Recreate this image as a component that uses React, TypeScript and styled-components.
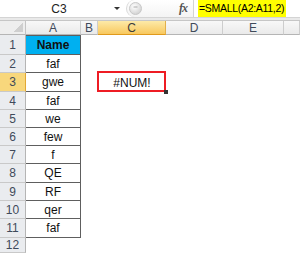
import React from 'react';
import styled, { createGlobalStyle } from 'styled-components';

const GlobalStyle = createGlobalStyle`
  body {
    margin: 0;
    background: #ffffff;
    font-family: "Liberation Sans", Arial, sans-serif;
  }
`;

const Window = styled.div`
  width: 300px;
  height: 253px;
  overflow: hidden;
  display: flex;
  flex-direction: column;
  background: #ffffff;
`;

const FormulaBar = styled.div`
  height: 22px;
  display: flex;
  align-items: stretch;
  background: #ffffff;
  border-bottom: 1px solid #d4d4d4;
  box-sizing: border-box;
`;

const NameBox = styled.div`
  width: 126px;
  display: flex;
  align-items: center;
  font-size: 12px;
  color: #222;
`;

const NameText = styled.span`
  flex: 1;
  text-align: center;
  padding-left: 4px;
`;

const DropArrow = styled.span`
  width: 0;
  height: 0;
  margin-right: 6px;
  border-left: 3px solid transparent;
  border-right: 3px solid transparent;
  border-top: 3px solid #333;
`;

const Tools = styled.div`
  width: 67px;
  display: flex;
  align-items: center;
  justify-content: space-between;
  padding: 0 6px 0 2px;
  box-sizing: border-box;
  border-left: 1px solid #d8d8d8;
  border-radius: 9px 0 0 9px;
  background: linear-gradient(#ffffff, #f4f4f4);
`;

const Fx = styled.span`
  font-family: "Liberation Serif", "Times New Roman", serif;
  font-style: italic;
  font-weight: bold;
  font-size: 12px;
  color: #555;
  letter-spacing: -1px;
`;

const FormulaInput = styled.div`
  flex: 1;
  display: flex;
  align-items: center;
  padding-left: 4px;
  border-left: 1px solid #d4d4d4;
  white-space: nowrap;
`;

const FormulaText = styled.span`
  background: #ffff00;
  font-size: 10.5px;
  letter-spacing: -0.3px;
  line-height: 17px;
  padding: 0 2px 0 1px;
  color: #000;
`;

const Spacer = styled.div`
  height: 3px;
  background: #e9e9e9;
  border-bottom: 1px solid #c6c6c6;
`;

const Sheet = styled.div`
  flex: 1;
  display: grid;
  grid-template-columns: 26px 55px 17px 68px 57px 61px 1fr;
  grid-template-rows: 14px 20px 18px 19px 18px 18px 18px 18px 19px 18px 18px 19px 1fr;
`;

const Corner = styled.div`
  position: relative;
  background: #eeeeee;
  border-right: 1px solid #c4c4c4;
  border-bottom: 1px solid #b5b5b5;

  &::after {
    content: '';
    position: absolute;
    right: 2px;
    bottom: 2px;
    width: 10px;
    height: 9px;
    background: linear-gradient(135deg, transparent 50%, #cfcfcf 50%);
  }
`;

const ColHeader = styled.div<{ $active?: boolean }>`
  display: flex;
  align-items: center;
  justify-content: center;
  font-size: 12px;
  color: ${(p) => (p.$active ? '#3b3b3b' : '#3f4a5a')};
  background: ${(p) =>
    p.$active
      ? 'linear-gradient(#fdeaa8, #f8c85e)'
      : 'linear-gradient(#f8f8f8, #eaeaea)'};
  border-right: 1px solid ${(p) => (p.$active ? '#e2b04a' : '#cdcdcd')};
  border-bottom: 1px solid ${(p) => (p.$active ? '#e09a1c' : '#b5b5b5')};
`;

const RowHeader = styled.div<{ $active?: boolean }>`
  display: flex;
  align-items: center;
  justify-content: center;
  font-size: 12px;
  color: #3f4a5a;
  background: ${(p) => (p.$active ? '#f8d77c' : '#eaecef')};
  border-right: 1px solid ${(p) => (p.$active ? '#e2a834' : '#b5b5b5')};
  border-bottom: 1px solid #c9c9c9;
`;

const DataCell = styled.div<{ $head?: boolean; $first?: boolean }>`
  display: flex;
  align-items: center;
  justify-content: center;
  font-size: 12px;
  font-weight: ${(p) => (p.$head ? 'bold' : 'normal')};
  color: #111;
  background: ${(p) => (p.$head ? '#00b0f0' : '#ffffff')};
  border-right: 1px solid #5e5e5e;
  border-bottom: 1px solid #5e5e5e;
  border-top: ${(p) => (p.$first ? '1px solid #5e5e5e' : 'none')};
  box-sizing: border-box;
`;

const Blank = styled.div`
  background: #ffffff;
`;

const ActiveCell = styled.div`
  position: relative;
  display: flex;
  align-items: center;
  justify-content: center;
  font-size: 12px;
  color: #111;

  &::before {
    content: '';
    position: absolute;
    left: -1px;
    top: -2px;
    right: 0;
    bottom: 0;
    border: 2px solid #ee1c24;
  }

  &::after {
    content: '';
    position: absolute;
    right: -2px;
    bottom: -2px;
    width: 4px;
    height: 4px;
    background: #333;
  }
`;

const columns = ['A', 'B', 'C', 'D', 'E', ''];
const names = ['faf', 'gwe', 'faf', 'we', 'few', 'f', 'QE', 'RF', 'qer', 'faf'];

const Grip = () => (
  <svg width="13" height="13" viewBox="0 0 13 13">
    <defs>
      <radialGradient id="g" cx="40%" cy="35%" r="70%">
        <stop offset="0" stopColor="#ffffff" />
        <stop offset="1" stopColor="#cfcfcf" />
      </radialGradient>
    </defs>
    <circle cx="6.5" cy="6.5" r="6" fill="url(#g)" stroke="#c8c8c8" />
    <line x1="4.5" y1="5" x2="8.5" y2="5" stroke="#a8a8a8" strokeWidth="1" />
  </svg>
);

const App = () => {
  const rows: React.ReactNode[] = [];

  for (let r = 1; r <= 12; r++) {
    rows.push(
      <RowHeader key={`h${r}`} $active={r === 3}>
        {r}
      </RowHeader>
    );
    if (r === 1) {
      rows.push(
        <DataCell key="a1" $head $first>
          Name
        </DataCell>
      );
    } else if (r <= 11) {
      rows.push(<DataCell key={`a${r}`}>{names[r - 2]}</DataCell>);
    } else {
      rows.push(<Blank key={`a${r}`} />);
    }
    for (let c = 1; c < columns.length; c++) {
      if (r === 3 && columns[c] === 'C') {
        rows.push(<ActiveCell key={`c${r}`}>#NUM!</ActiveCell>);
      } else {
        rows.push(<Blank key={`${c}-${r}`} />);
      }
    }
  }

  return (
    <Window>
      <GlobalStyle />
      <FormulaBar>
        <NameBox>
          <NameText>C3</NameText>
          <DropArrow />
        </NameBox>
        <Tools>
          <Grip />
          <Fx>fx</Fx>
        </Tools>
        <FormulaInput>
          <FormulaText>=SMALL(A2:A11,2)</FormulaText>
        </FormulaInput>
      </FormulaBar>
      <Spacer />
      <Sheet>
        <Corner />
        {columns.map((c) => (
          <ColHeader key={c || 'F'} $active={c === 'C'}>
            {c}
          </ColHeader>
        ))}
        {rows}
      </Sheet>
    </Window>
  );
};

export default App;
